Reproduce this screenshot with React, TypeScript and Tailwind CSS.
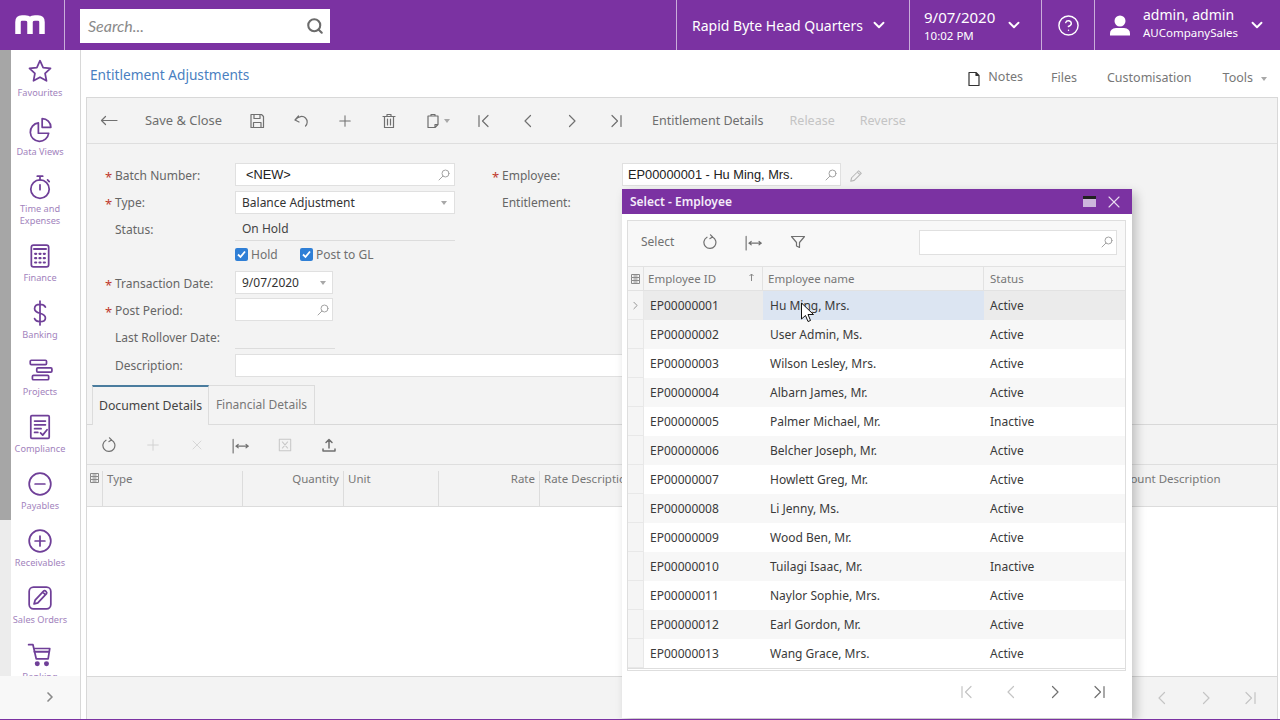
import { ChevronDown, ChevronRight, CircleHelp, Plus, Search, X } from "lucide-react";
import type { ReactNode } from "react";

const iconProps = {
  fill: "none",
  stroke: "currentColor",
  strokeWidth: 1.2,
  strokeLinecap: "round" as const,
  strokeLinejoin: "round" as const,
};

const Ico = ({ size = 16, className = "", children }: { size?: number; className?: string; children: ReactNode }) => (
  <svg width={size} height={size} viewBox="0 0 16 16" className={className} {...iconProps}>
    {children}
  </svg>
);

const FirstIcon = ({ className = "" }: { className?: string }) => (
  <Ico className={className}><path d="M3 2.500v11M12 2.500 6.500 8l5.500 5.500" /></Ico>
);
const PrevIcon = ({ className = "" }: { className?: string }) => (
  <Ico className={className}><path d="M10.500 2.500 5 8l5.500 5.500" /></Ico>
);
const NextIcon = ({ className = "" }: { className?: string }) => (
  <Ico className={className}><path d="M5.500 2.500 11 8l-5.500 5.500" /></Ico>
);
const LastIcon = ({ className = "" }: { className?: string }) => (
  <Ico className={className}><path d="M13 2.500v11M4 2.500 9.500 8 4 13.500" /></Ico>
);
const FitIcon = () => (
  <Ico size={18}><path d="M1 3v12M17 3v12M3.500 9h11M5.500 7.500 3.500 9l2 1.500M12.500 7.500l2 1.500-2 1.500" strokeWidth="1" /></Ico>
);
const RefreshIcon = () => (
  <Ico size={16}><path d="M5 3.200a6 6 0 1 0 5.400-.2M8.500 0.800 10.600 3 8 4.600" /></Ico>
);
const LookupIcon = () => (
  <svg width="12" height="12" viewBox="0 0 12 12" className="text-[#a3a3a3]" {...iconProps} strokeWidth={1}>
    <circle cx="7.500" cy="4.500" r="3.500" />
    <path d="M5 7 1 11" />
  </svg>
);
const Caret = () => <span className="inline-block h-0 w-0 border-x-[3.500px] border-t-[4px] border-x-transparent border-t-[#a8a8a8]" />;
const ColumnsIcon = () => (
  <svg width="11" height="12" viewBox="0 0 11 12" className="text-[#8a8a8a]" fill="none" stroke="currentColor">
    <path d="M1.500 1.500h8v3h-8zM1.500 4.500h8v3h-8zM1.500 7.500h8v3h-8z" />
    <path d="M3.500 3h4M3.500 6h4M3.500 9h4" />
  </svg>
);

const navItems: { label: string[]; h: string; icon: ReactNode }[] = [
  { label: ["Favourites"], h: "h-[59px]", icon: <path d="M12 2.500l2.900 6.300 6.800.8-5 4.700 1.300 6.800-6-3.400-6 3.400 1.300-6.800-5-4.700 6.800-.8z" /> },
  {
    label: ["Data Views"],
    h: "h-[57px]",
    icon: (
      <>
        <path d="M10.500 5.500A8.500 8.500 0 1 0 20 15h-9.500z" />
        <path d="M14 1.500a8 8 0 0 1 8 8h-8z" />
      </>
    ),
  },
  {
    label: ["Time and", "Expenses"],
    h: "h-[69px]",
    icon: (
      <>
        <circle cx="12" cy="14" r="8.500" />
        <path d="M9.500 2h5M12 2v3.500M12 10v4.500M19 5.500l1.500 1.500" />
      </>
    ),
  },
  {
    label: ["Finance"],
    h: "h-[57px]",
    icon: (
      <>
        <rect x="4" y="2" width="16" height="20" rx="2" />
        <path d="M6.500 5.500h11M7.500 10h1M11.500 10h1M15.500 10h1M7.500 14h1M11.500 14h1M15.500 14h1M7.500 18h1M11.500 18h1M15.500 18h1" strokeWidth="2" />
      </>
    ),
  },
  {
    label: ["Banking"],
    h: "h-[57px]",
    icon: <path d="M17 6.500C16 4.500 14 4 12 4 9 4 7 5.500 7 8c0 5.500 10 3 10 8.500 0 2.500-2.200 3.500-5 3.500-2.200 0-4.200-.8-5-2.800M12 1v22" />,
  },
  {
    label: ["Projects"],
    h: "h-[57px]",
    icon: (
      <>
        <rect x="3" y="3" width="15" height="4" rx="1" />
        <rect x="9" y="10" width="14" height="4" rx="1" />
        <rect x="5" y="17" width="15" height="4" rx="1" />
      </>
    ),
  },
  {
    label: ["Compliance"],
    h: "h-[57px]",
    icon: (
      <>
        <rect x="3.500" y="1.500" width="17" height="21" rx="1" />
        <path d="M7 6.500h10M7 10h10M7 13.500h6M7 17h3M12.500 17.500l2 2 4-5" />
      </>
    ),
  },
  {
    label: ["Payables"],
    h: "h-[57px]",
    icon: (
      <>
        <circle cx="12" cy="12" r="10" />
        <path d="M7.500 12h9" />
      </>
    ),
  },
  {
    label: ["Receivables"],
    h: "h-[57px]",
    icon: (
      <>
        <circle cx="12" cy="12" r="10" />
        <path d="M7.500 12h9M12 7.500v9" />
      </>
    ),
  },
  {
    label: ["Sales Orders"],
    h: "h-[57px]",
    icon: (
      <>
        <rect x="2" y="2" width="20" height="20" rx="4" />
        <path d="M6.500 17.500l1-3.500 8-8.500c1-1 3.500 1 2.500 2.500l-8 8.500zM14.500 6.500l2.500 2.500" />
      </>
    ),
  },
  {
    label: ["Banking"],
    h: "h-[57px]",
    icon: (
      <>
        <path d="M1.500 2.500h4l3 13h11l1.500-9.500H6.500" />
        <path d="M7 9h13" strokeWidth="2" />
        <circle cx="9.500" cy="20" r="1.500" fill="currentColor" />
        <circle cx="18" cy="20" r="1.500" fill="currentColor" />
      </>
    ),
  },
];

const rows = [
  ["EP00000001", "Hu Ming, Mrs.", "Active"],
  ["EP00000002", "User Admin, Ms.", "Active"],
  ["EP00000003", "Wilson Lesley, Mrs.", "Active"],
  ["EP00000004", "Albarn James, Mr.", "Active"],
  ["EP00000005", "Palmer Michael, Mr.", "Inactive"],
  ["EP00000006", "Belcher Joseph, Mr.", "Active"],
  ["EP00000007", "Howlett Greg, Mr.", "Active"],
  ["EP00000008", "Li Jenny, Ms.", "Active"],
  ["EP00000009", "Wood Ben, Mr.", "Active"],
  ["EP00000010", "Tuilagi Isaac, Mr.", "Inactive"],
  ["EP00000011", "Naylor Sophie, Mrs.", "Active"],
  ["EP00000012", "Earl Gordon, Mr.", "Active"],
  ["EP00000013", "Wang Grace, Mrs.", "Active"],
];

const Field = ({ label, required, children }: { label: string; required?: boolean; children: ReactNode }) => (
  <div className="flex h-[27px] items-center">
    <span className="w-[10px] pt-[3px] text-[13px] leading-none text-[#c0392b]">{required ? "*" : ""}</span>
    <span className="w-[120px] text-[#666]">{label}</span>
    {children}
  </div>
);

const InputBox = ({ className, children }: { className: string; children?: ReactNode }) => (
  <div className={`flex h-[23px] items-center border border-[#e0e0e0] bg-white ${className}`}>{children}</div>
);

const ToolBtn = ({ children, className = "" }: { children: ReactNode; className?: string }) => (
  <div className={`flex h-full w-[44px] shrink-0 items-center justify-center text-[#707070] ${className}`}>{children}</div>
);

const Sidebar = () => (
  <div className="flex w-[81px] shrink-0 flex-col overflow-hidden border-r border-[#d8d8d8] bg-white">
    <div className="relative flex min-h-0 flex-1">
      <div className="flex w-[11px] shrink-0 flex-col">
        <div className="h-[470px] bg-[#a6a6a6]" />
        <div className="flex-1 bg-[#ececec]" />
      </div>
      <div className="flex w-[58px] flex-col items-center overflow-hidden pt-[8px]">
        {navItems.map((item, i) => (
          <div key={i} className={`flex shrink-0 flex-col items-center ${item.h}`}>
            <svg width="26" height="26" viewBox="0 0 24 24" className="text-[#6f3f98]" {...iconProps} strokeWidth={1.600}>
              {item.icon}
            </svg>
            <div className="mt-[3px] flex flex-col items-center">
              {item.label.map((l) => (
                <span key={l} className="mb-[1px] text-[9.200px] leading-[11px] whitespace-nowrap text-[#a283bd]">{l}</span>
              ))}
            </div>
          </div>
        ))}
      </div>
    </div>
    <div className="flex h-[43px] shrink-0 items-center justify-end bg-[#f8f8f8] pr-[22px] pb-[2px] text-[#8a8a8a]">
      <ChevronRight size={16} strokeWidth={2.500} />
    </div>
  </div>
);

const Header = () => (
  <header className="flex h-[50px] shrink-0 bg-[#7b32a2] text-white">
    <div className="flex w-[65px] items-center justify-center border-r border-white/60 pr-[4px]">
      <svg width="32" height="24" viewBox="0 0 32 24" fill="none" stroke="white" strokeWidth="5.500">
        <path d="M4 21V9q0-4 4-4h3q5 0 5 4v12M16 9q0-4 5-4h3q4 0 4 4v12" />
      </svg>
    </div>
    <div className="ml-[15px] mt-[9px] flex h-[34px] w-[250px] items-center justify-between bg-white pl-[8px] pr-[6px]">
      <span className="font-['Lato'] text-[16px] text-[#8a8a8a] italic">Search...</span>
      <Search size={18} strokeWidth={2.800} className="text-[#6b6b6b]" />
    </div>
    <div className="flex-1" />
    <div className="flex w-[233px] items-center border-l border-white/60 pl-[15px]">
      <span className="text-[14px] text-white">Rapid Byte Head Quarters</span>
      <ChevronDown size={18} strokeWidth={2.500} className="ml-[7px]" />
    </div>
    <div className="flex w-[132px] items-center border-l border-white/60 pl-[14px]">
      <div className="flex flex-col">
        <span className="text-[15px] leading-[20px]">9/07/2020</span>
        <span className="mt-[1px] text-[11.500px] leading-[16px]">10:02 PM</span>
      </div>
      <ChevronDown size={18} strokeWidth={2.500} className="ml-[10px]" />
    </div>
    <div className="flex w-[53px] items-center justify-center border-l border-white/60">
      <CircleHelp size={23} strokeWidth={1.500} />
    </div>
    <div className="flex w-[186px] items-center border-l border-white/60 pl-[14px]">
      <svg width="22" height="21" viewBox="0 0 22 21" fill="white">
        <circle cx="11" cy="6" r="5.500" />
        <path d="M1 20.500v-2q0-5 6-5.500h8q6 .5 6 5.500v2z" />
      </svg>
      <div className="mb-[4px] ml-[12px] flex flex-col">
        <span className="text-[14px] leading-[18px]">admin, admin</span>
        <span className="mt-[1px] text-[11.500px] leading-[16px]">AUCompanySales</span>
      </div>
      <ChevronDown size={18} strokeWidth={2.500} className="ml-[10px]" />
    </div>
  </header>
);

const MainToolbar = () => (
  <div className="flex h-[46px] shrink-0 items-center border-b border-[#dedede] text-[12.500px] text-[#6e6e6e]">
    <ToolBtn className="w-[41px]">
      <svg width="18" height="12" viewBox="0 0 18 12" {...iconProps}>
        <path d="M5.500 1.500 1.500 5.500l4 4M1.500 5.500H17" />
      </svg>
    </ToolBtn>
    <span className="pl-[14px] pr-[13px] text-[12.900px]">Save &amp; Close</span>
    <ToolBtn><Ico><path d="M2 1.500h10.500l2 2V14.500H2zM5 1.500v4h6v-4M4.500 14.500v-5h7.500v5" /></Ico></ToolBtn>
    <ToolBtn><Ico><path d="M5.500 3 2 7l4 2M2 7c3.500-4 8-4.500 10.500-2s2 6 0 8" /></Ico></ToolBtn>
    <ToolBtn><Plus size={18} strokeWidth={1.400} /></ToolBtn>
    <ToolBtn><Ico><path d="M2 3.500h12M6 3.500v-2h4v2M3.500 3.500v11h9v-11M6.500 6v6M9.500 6v6" /></Ico></ToolBtn>
    <div className="flex h-full w-[51px] shrink-0 items-center pl-[14px]">
      <Ico><path d="M3 3h10v8.500L10 14.500H3zM6 3V1.500h4V3M13 11.500h-3v3" /></Ico>
      <span className="ml-[3px] flex"><Caret /></span>
    </div>
    <ToolBtn><FirstIcon /></ToolBtn>
    <ToolBtn><PrevIcon /></ToolBtn>
    <ToolBtn><NextIcon /></ToolBtn>
    <ToolBtn><LastIcon /></ToolBtn>
    <span className="mt-[1px] px-[14px]">Entitlement Details</span>
    <span className="ml-[12px] mt-[1px] text-[#c4c4c4]">Release</span>
    <span className="ml-[25px] mt-[1px] text-[#c4c4c4]">Reverse</span>
  </div>
);

const Form = () => (
  <div className="shrink-0 pl-[18px] pt-[18px]">
    <div className="flex">
      <div className="w-[387px] shrink-0">
        <Field label="Batch Number:" required>
          <InputBox className="mb-[2px] w-[220px] justify-between pl-[10px] pr-[4px] font-['Liberation_Sans'] text-[12.800px] text-[#222]">
            &lt;NEW&gt;<LookupIcon />
          </InputBox>
        </Field>
        <Field label="Type:" required>
          <InputBox className="w-[220px] justify-between pl-[6px] pr-[7px] text-[#333]">
            Balance Adjustment<Caret />
          </InputBox>
        </Field>
        <Field label="Status:">
          <div className="flex h-[23px] w-[220px] items-center border-b border-[#dcdcdc] pl-[7px] text-[#444]">On Hold</div>
        </Field>
        <div className="flex h-[23px] items-center pl-[130px] text-[#707070]">
          <span className="flex h-[13px] w-[13px] items-center justify-center rounded-[2px] bg-[#2f7fd6]">
            <svg width="9" height="9" viewBox="0 0 9 9" fill="none" stroke="white" strokeWidth="1.800"><path d="M1 4.500 3.500 7 8 1.500" /></svg>
          </span>
          <span className="ml-[3px] w-[49px]">Hold</span>
          <span className="flex h-[13px] w-[13px] items-center justify-center rounded-[2px] bg-[#2f7fd6]">
            <svg width="9" height="9" viewBox="0 0 9 9" fill="none" stroke="white" strokeWidth="1.800"><path d="M1 4.500 3.500 7 8 1.500" /></svg>
          </span>
          <span className="ml-[3px]">Post to GL</span>
        </div>
        <div className="h-[4px]" />
        <Field label="Transaction Date:" required>
          <InputBox className="mb-[2px] w-[98px] justify-between pl-[6px] pr-[6px] text-[#333]">
            9/07/2020<Caret />
          </InputBox>
        </Field>
        <Field label="Post Period:" required>
          <InputBox className="mb-[2px] w-[98px] justify-end pr-[3px]"><LookupIcon /></InputBox>
        </Field>
        <Field label="Last Rollover Date:">
          <div className="h-[23px] w-[100px] border-b border-[#dcdcdc]" />
        </Field>
      </div>
      <div>
        <Field label="Employee:" required>
          <InputBox className="mb-[2px] w-[219px] justify-between pl-[5px] pr-[3px] font-['Liberation_Sans'] text-[12.800px] text-[#222]">
            EP00000001 - Hu Ming, Mrs.<LookupIcon />
          </InputBox>
          <Ico size={14} className="ml-[8px] text-[#b5b5b5]"><path d="M2 14l1-4 8-8 3 3-8 8zM9.500 3.500l3 3" /></Ico>
        </Field>
        <Field label="Entitlement:"><span /></Field>
      </div>
    </div>
    <div className="mt-[1px]">
      <Field label="Description:">
        <InputBox className="w-[765px]" />
      </Field>
    </div>
  </div>
);

const Tabs = () => (
  <div className="mt-[6px] flex h-[40px] shrink-0 items-end">
    <div className="h-full w-[5px] border-b border-[#d8d8d8]" />
    <div className="flex h-full w-[117px] items-center justify-center border-t-2 border-r border-l border-t-[#4a7c9e] border-r-[#dcdcdc] border-l-[#dcdcdc] text-[12.300px] text-[#444]">Document Details</div>
    <div className="flex h-full w-[106px] items-center justify-center border-t border-r border-b border-[#dcdcdc] text-[#777]">Financial Details</div>
    <div className="h-full flex-1 border-b border-[#d8d8d8]" />
  </div>
);

const DetailGrid = () => (
  <div className="flex min-h-0 flex-1 flex-col">
    <div className="flex h-[40px] shrink-0 items-center border-b border-[#dedede] text-[#707070]">
      <ToolBtn className="w-[43px]"><RefreshIcon /></ToolBtn>
      <ToolBtn className="text-[#cfcfcf]"><Plus size={18} strokeWidth={1.200} /></ToolBtn>
      <ToolBtn className="text-[#cfcfcf]"><X size={16} strokeWidth={1.200} /></ToolBtn>
      <ToolBtn><FitIcon /></ToolBtn>
      <ToolBtn className="text-[#c8c8c8]"><Ico size={14}><path d="M1.500 1.500h13v13h-13zM5 4.500l6 7M11 4.500l-6 7" /></Ico></ToolBtn>
      <ToolBtn><Ico><path d="M8 11V2.500M5 5.500l3-3 3 3M2 12v2h12v-2" strokeWidth="1.500" /></Ico></ToolBtn>
    </div>
    <div className="flex h-[42px] shrink-0 border-b border-[#dcdcdc] pt-[6px] text-[11.500px] leading-[16px] text-[#777]">
      <div className="flex w-[16px] justify-center border-r border-[#dcdcdc] pt-[1px]"><ColumnsIcon /></div>
      <div className="w-[140px] border-r border-[#dcdcdc] pl-[4px]">Type</div>
      <div className="w-[101px] border-r border-[#dcdcdc] pr-[4px] text-right">Quantity</div>
      <div className="w-[95px] border-r border-[#dcdcdc] pl-[4px]">Unit</div>
      <div className="w-[101px] border-r border-[#dcdcdc] pr-[4px] text-right">Rate</div>
      <div className="w-[568px] border-r border-[#dcdcdc] pl-[4px]">Rate Description</div>
      <div className="flex-1 pl-[4px]">Account Description</div>
    </div>
    <div className="flex-1 bg-white" />
    <div className="flex h-[43px] shrink-0 items-center justify-end border-t border-[#d8d8d8] pr-[5px]">
      <ToolBtn className="text-[#c4c4c4]"><PrevIcon /></ToolBtn>
      <ToolBtn className="text-[#c4c4c4]"><NextIcon /></ToolBtn>
      <ToolBtn className="text-[#c4c4c4]"><LastIcon /></ToolBtn>
    </div>
  </div>
);

const EmployeeDialog = () => (
  <div className="absolute left-[622px] top-[189px] flex h-[529px] w-[510px] flex-col bg-white shadow-[4px_4px_10px_rgba(0,0,0,0.22)]">
    <div className="flex h-[25px] shrink-0 items-center justify-between bg-[#7b32a2] pl-[8px] pr-[8px] font-semibold text-[#f4ecf9]">
      <span>Select - Employee</span>
      <div className="flex items-center gap-[8px]">
        <span className="h-[11px] w-[13px] border-t-[3px] border-[#222] bg-[#cdb6dd]" />
        <X size={20} strokeWidth={1.300} className="text-[#e8dcf0]" />
      </div>
    </div>
    <div className="ml-[5px] mt-[6px] flex w-[499px] flex-col border border-[#dedede]">
      <div className="flex h-[45px] shrink-0 items-center bg-[#f8f8f8] pb-[3px] text-[#707070]">
        <span className="ml-[13px] w-[45px]">Select</span>
        <ToolBtn className="ml-[2px]"><RefreshIcon /></ToolBtn>
        <ToolBtn><FitIcon /></ToolBtn>
        <ToolBtn>
          <Ico><path d="M1.500 2.500h13L9.500 8.500v5l-3-1.500V8.500z" /></Ico>
        </ToolBtn>
        <div className="ml-[99px] flex h-[25px] w-[198px] items-center justify-end border border-[#e0e0e0] bg-white pr-[3px]"><LookupIcon /></div>
      </div>
      <div className="flex h-[25px] shrink-0 items-center border-y border-[#e2e2e2] bg-[#f5f5f5] text-[11.500px] text-[#777]">
        <div className="flex h-full w-[16px] items-center justify-center border-r border-[#e2e2e2]"><ColumnsIcon /></div>
        <div className="flex h-full w-[119px] items-center justify-between border-r border-[#e2e2e2] pl-[4px] pr-[8px]">
          Employee ID
          <svg width="5" height="8" viewBox="0 0 5 8" className="mb-[3px]" fill="none" stroke="#888"><path d="M2.500 8V1M.5 3l2-2 2 2" /></svg>
        </div>
        <div className="flex h-full w-[221px] items-center border-r border-[#e2e2e2] pl-[5px]">Employee name</div>
        <div className="pl-[6px]">Status</div>
      </div>
      {rows.map((r, i) => (
        <div
          key={r[0]}
          className={`flex h-[29px] shrink-0 items-center text-[#3a3a3a] ${i === 0 ? "bg-[#ebebeb]" : i % 2 === 1 ? "bg-[#f7f7f7]" : "bg-white"}`}
        >
          <div className="flex h-full w-[16px] items-center justify-center border-r border-b border-[#e8e8e8] bg-[#f5f5f5] text-[#808080]">
            {i === 0 && <ChevronRight size={13} strokeWidth={1.500} />}
          </div>
          <div className="w-[119px] pl-[6px]">{r[0]}</div>
          <div className={`flex h-full w-[221px] items-center pl-[7px] ${i === 0 ? "bg-[#dce5f2]" : ""}`}>{r[1]}</div>
          <div className="pl-[6px]">{r[2]}</div>
        </div>
      ))}
      <div className="h-[2px] border-t border-[#dedede]" />
    </div>
    <div className="flex flex-1 items-center justify-end pr-[11px] pb-[6px]">
      <ToolBtn className="text-[#c4c4c4]"><FirstIcon /></ToolBtn>
      <ToolBtn className="text-[#c4c4c4]"><PrevIcon /></ToolBtn>
      <ToolBtn className="text-[#555]"><NextIcon /></ToolBtn>
      <ToolBtn className="text-[#555]"><LastIcon /></ToolBtn>
    </div>
  </div>
);

export default function App() {
  return (
    <div className="relative flex h-[720px] w-[1280px] flex-col overflow-hidden border-b border-[#7b32a2] bg-white font-['Noto_Sans',sans-serif] text-[12px]">
      <Header />
      <div className="flex min-h-0 flex-1">
        <Sidebar />
        <div className="flex min-w-0 flex-1 flex-col pl-[5px] pr-[2px]">
          <div className="flex h-[47px] shrink-0 items-center pt-[10px] text-[12.500px] text-[#777]">
            <span className="mb-[6px] ml-[4px] text-[13.700px] text-[#4a7fc1]">Entitlement Adjustments</span>
            <div className="flex-1" />
            <Ico size={16} className="text-[#333]"><path d="M3 1.500h7l3 3V14.500H3zM10 1.500v3h3" /></Ico>
            <span className="mb-[2px] ml-[6px]">Notes</span>
            <span className="ml-[28px]">Files</span>
            <span className="ml-[30px]">Customisation</span>
            <span className="ml-[31px]">Tools</span>
            <span className="ml-[8px] mr-[11px] flex"><Caret /></span>
          </div>
          <div className="flex min-h-0 flex-1 flex-col border-t border-r border-l border-[#d8d8d8] bg-[#f3f3f3]">
            <MainToolbar />
            <Form />
            <Tabs />
            <DetailGrid />
          </div>
        </div>
      </div>
      <EmployeeDialog />
      {/* mouse pointer */}
      <svg width="16" height="22" viewBox="0 0 16 22" className="absolute left-[800px] top-[302px]">
        <path d="M1.500 1v16l4-3.500 2.500 6 2.500-1-2.500-6h5.500z" fill="white" stroke="#111" strokeWidth="1" />
      </svg>
    </div>
  );
}
